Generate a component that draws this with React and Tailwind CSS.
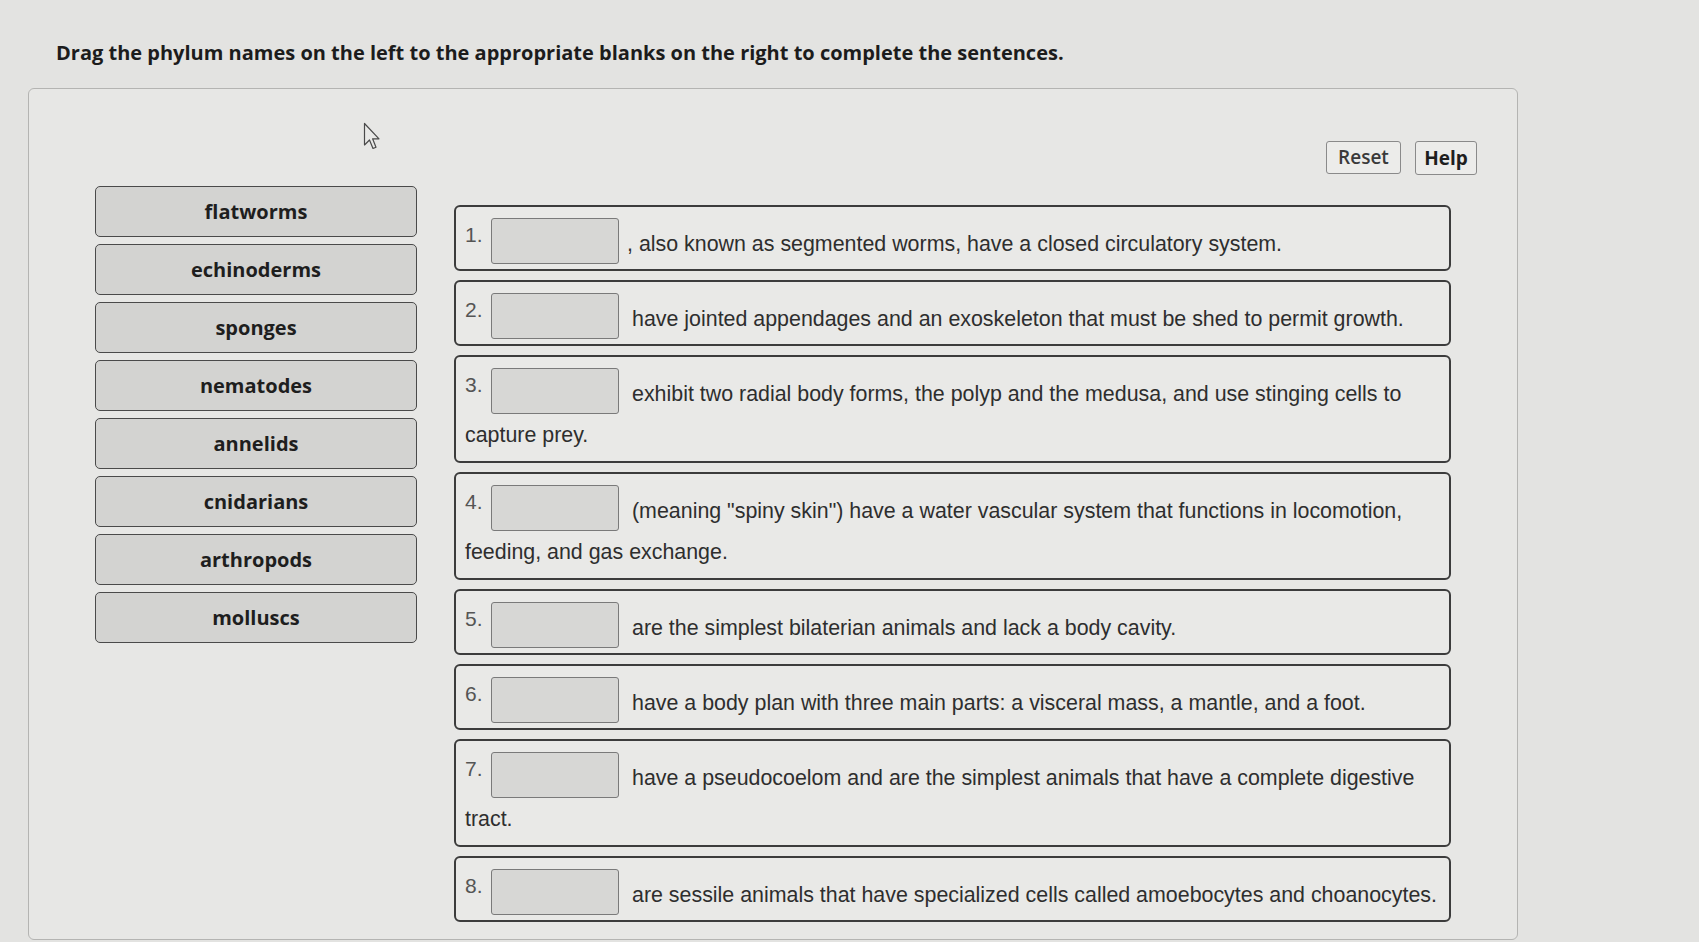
import React from "react";

const labels = [
  "flatworms",
  "echinoderms",
  "sponges",
  "nematodes",
  "annelids",
  "cnidarians",
  "arthropods",
  "molluscs",
];

const sentences = [
  { a: ", also known as segmented worms, have a closed circulatory system.", first: true },
  { a: "have jointed appendages and an exoskeleton that must be shed to permit growth." },
  {
    a: "exhibit two radial body forms, the polyp and the medusa, and use stinging cells to",
    b: "capture prey.",
  },
  {
    a: "(meaning \"spiny skin\") have a water vascular system that functions in locomotion,",
    b: "feeding, and gas exchange.",
  },
  { a: "are the simplest bilaterian animals and lack a body cavity." },
  { a: "have a body plan with three main parts: a visceral mass, a mantle, and a foot." },
  {
    a: "have a pseudocoelom and are the simplest animals that have a complete digestive",
    b: "tract.",
  },
  { a: "are sessile animals that have specialized cells called amoebocytes and choanocytes." },
];

const openSans = { fontFamily: '"Open Sans", "Noto Sans", sans-serif' };
const arial = { fontFamily: '"Liberation Sans", Arial, sans-serif' };

function Cursor() {
  return (
    <svg
      className="absolute left-[334px] top-[33px]"
      width="18"
      height="30"
      viewBox="0 0 18 30"
      fill="none"
    >
      <path
        d="M1.5 1.5 V23 L6.5 18 L10 26.5 L13 25.2 L9.6 16.8 H16 Z"
        stroke="#4a4a4a"
        strokeWidth="1.2"
        strokeLinejoin="round"
        fill="#e9e9e7"
      />
    </svg>
  );
}

function Sentence({ n, a, b, first }) {
  return (
    <div
      className="rounded-[6px] border-2 border-[#3c3c3c] bg-[#e9e9e7] pl-[9px] pr-[8px] pt-[11px] pb-[5px] text-[21.4px] text-[#2e2e2e]"
      style={arial}
    >
      <div className="flex items-start">
        <span className="w-[18px] shrink-0 pt-[6px] text-[21px] leading-[21px] text-[#555555]">
          {n}.
        </span>
        <span className="ml-[8px] h-[46px] w-[128px] shrink-0 rounded-[3px] border-[1.5px] border-[#7a7a7a] bg-[#d7d7d5]" />
        <span
          className={
            "self-center whitespace-nowrap pt-[6px] leading-[24px] " +
            (first ? "ml-[8px]" : "ml-[13px]")
          }
        >
          {a}
        </span>
      </div>
      {b && <div className="leading-[42px]">{b}</div>}
    </div>
  );
}

export default function App() {
  return (
    <div className="min-h-[942px] w-full overflow-hidden bg-[#e3e3e1]">
      <div className="h-[88px] pl-[56px] pt-[40px]">
        <h1
          className="text-[20px] leading-[26px] font-bold text-[#1c1c1c]"
          style={openSans}
        >
          Drag the phylum names on the left to the appropriate blanks on the right to complete the sentences.
        </h1>
      </div>

      <div className="relative ml-[28px] h-[852px] w-[1490px] overflow-hidden rounded-[6px] border-[1.5px] border-[#b4b4b2] bg-[#e7e7e5]">
        <Cursor />

        <div className="flex justify-end gap-[14px] pr-[40px] pt-[52px]">
          <button
            className="h-[33px] w-[75px] rounded-[3px] border border-[#8a8a8a] bg-[#ececea] text-[19px] font-semibold text-[#3a3a3a]"
            style={openSans}
          >
            Reset
          </button>
          <button
            className="h-[34px] w-[62px] rounded-[3px] border border-[#8a8a8a] bg-[#ececea] text-[19px] font-bold text-[#1e1e1e]"
            style={openSans}
          >
            Help
          </button>
        </div>

        <div className="flex items-start gap-[37px] pl-[66px]">
          <div className="mt-[11px] flex w-[322px] flex-col gap-[7px]">
            {labels.map((l) => (
              <div
                key={l}
                className="flex h-[51px] items-center justify-center rounded-[5px] border-[1.5px] border-[#4a4a4a] bg-[#d3d3d1] text-[20px] font-bold text-[#1e1e1e]"
                style={openSans}
              >
                {l}
              </div>
            ))}
          </div>

          <div className="mt-[30px] flex w-[997px] flex-col gap-[9px]">
            {sentences.map((s, i) => (
              <Sentence key={i} n={i + 1} a={s.a} b={s.b} first={s.first} />
            ))}
          </div>
        </div>
      </div>
    </div>
  );
}
